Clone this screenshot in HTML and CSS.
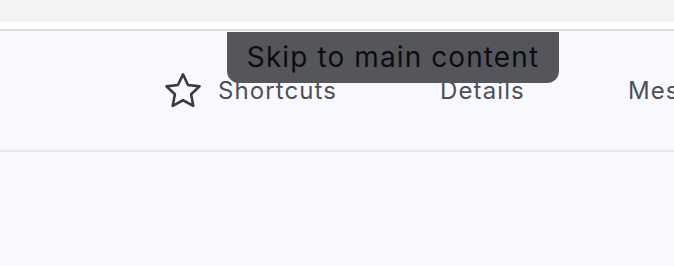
FILE: index.html
```html
<!DOCTYPE html>
<html>
<head>
<meta charset="utf-8">
<link rel="stylesheet" href="styles.css">
</head>
<body>
<div class="topband"></div>
<div class="whiteband"></div>
<header class="header">
  <nav class="nav">
    <a class="nav-item" href="#">
      <svg class="star" width="38" height="36" viewBox="1.5 1.5 21 20" fill="none" stroke="currentColor" stroke-width="1.45" stroke-linejoin="round"><path d="M12 2.8l2.8 5.9 6.4.8-4.7 4.4 1.2 6.4L12 17.2l-5.7 3.1 1.2-6.4-4.7-4.4 6.4-.8z"/></svg>
      <span>Shortcuts</span>
    </a>
    <a class="nav-item" href="#"><span>Details</span></a>
    <a class="nav-item" href="#"><span>Messages</span></a>
  </nav>
  <a class="skip" href="#main">Skip to main content</a>
</header>
<main id="main" class="main"></main>
</body>
</html>
```
FILE: styles.css
```css
html, body {
  margin: 0;
  padding: 0;
}
body {
  width: 674px;
  height: 266px;
  overflow: hidden;
  background: #f8f9fe;
  font-family: Inter, "Liberation Sans", sans-serif;
}
.topband {
  height: 22px;
  background: #f2f3f5;
}
.whiteband {
  height: 7px;
  background: #ffffff;
  border-bottom: 2px solid #dcdcde;
}
.header {
  position: relative;
  height: 119px;
  border-bottom: 2px solid #e5e7eb;
  display: flex;
  align-items: center;
  overflow: hidden;
}
.nav {
  display: flex;
  align-items: center;
  gap: 103px;
  padding-left: 164px;
  white-space: nowrap;
}
.nav-item {
  display: flex;
  align-items: center;
  gap: 16px;
  color: #4f4f57;
  text-decoration: none;
  font-size: 24px;
  letter-spacing: 1.1px;
  line-height: 32px;
}
.star {
  color: #3a3a41;
  margin-top: -1px;
}
.skip {
  position: absolute;
  top: 1px;
  left: 227px;
  width: 332px;
  height: 51px;
  box-sizing: border-box;
  background: #55565b;
  color: #0d0d0f;
  border-radius: 0 0 12px 12px;
  font-size: 28px;
  letter-spacing: 1.1px;
  line-height: 50px;
  text-align: center;
  text-decoration: none;
}
.main {
  height: 100px;
}
```
